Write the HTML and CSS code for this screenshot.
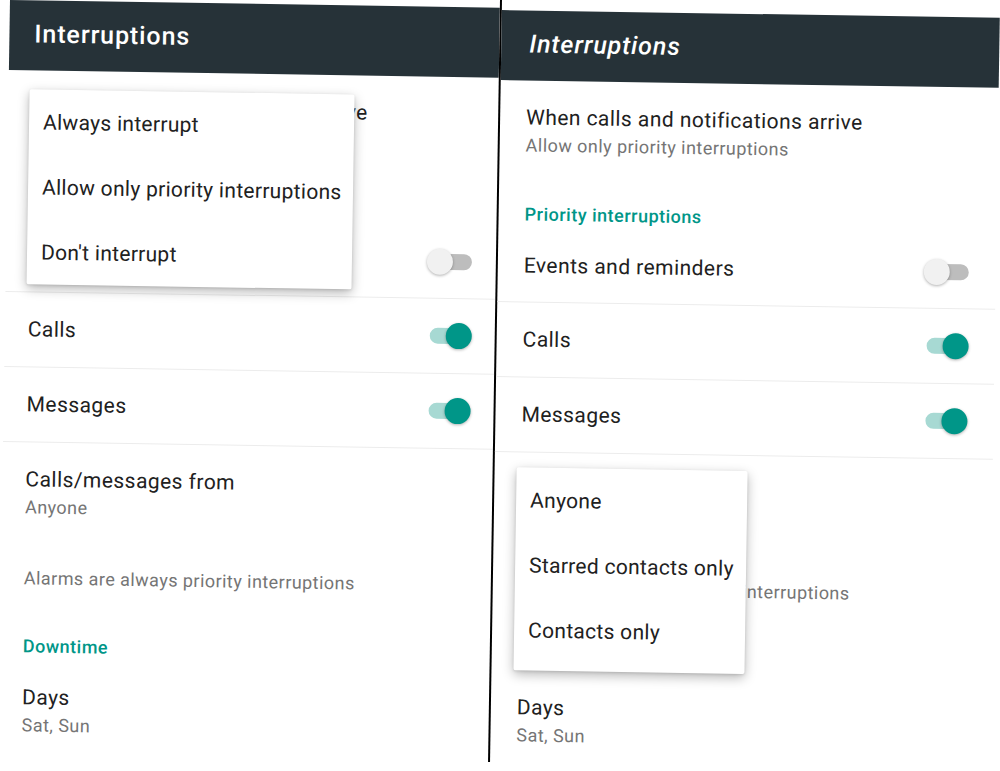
FILE: index.html
```html
<!DOCTYPE html>
<html lang="en">
<head>
<meta charset="utf-8">
<title>Interruptions</title>
<link rel="stylesheet" href="styles.css">
</head>
<body>
<div class="screen">
  <section class="panel panel-left">
    <header class="appbar"><h1 class="appbar-title">Interruptions</h1></header>
    <div class="list">
      <div class="pref pref-first">
        <div class="pref-title">When calls and notifications arrive</div>
        <div class="pref-summary">Allow only priority interruptions</div>
      </div>
      <div class="category category-priority">Priority interruptions</div>
      <div class="switch-row row-events"><span class="pref-title">Events and reminders</span><span class="switch"></span></div>
      <div class="switch-row"><span class="pref-title">Calls</span><span class="switch on"></span></div>
      <div class="switch-row"><span class="pref-title">Messages</span><span class="switch on"></span></div>
      <div class="pref pref-from">
        <div class="pref-title">Calls/messages from</div>
        <div class="pref-summary">Anyone</div>
      </div>
      <div class="note">Alarms are always priority interruptions</div>
      <div class="category category-downtime">Downtime</div>
      <div class="pref pref-days">
        <div class="pref-title">Days</div>
        <div class="pref-summary">Sat, Sun</div>
      </div>
    </div>
    <div class="menu menu-mode">
      <div class="menu-item">Always interrupt</div>
      <div class="menu-item">Allow only priority interruptions</div>
      <div class="menu-item">Don't interrupt</div>
    </div>
  </section>
  <section class="panel panel-right">
    <header class="appbar"><h1 class="appbar-title slanted">Interruptions</h1></header>
    <div class="list">
      <div class="pref pref-first">
        <div class="pref-title">When calls and notifications arrive</div>
        <div class="pref-summary">Allow only priority interruptions</div>
      </div>
      <div class="category category-priority">Priority interruptions</div>
      <div class="switch-row row-events"><span class="pref-title">Events and reminders</span><span class="switch"></span></div>
      <div class="switch-row"><span class="pref-title">Calls</span><span class="switch on"></span></div>
      <div class="switch-row"><span class="pref-title">Messages</span><span class="switch on"></span></div>
      <div class="pref pref-from">
        <div class="pref-title">Calls/messages from</div>
        <div class="pref-summary">Anyone</div>
      </div>
      <div class="note">Alarms are always priority interruptions</div>
      <div class="category category-downtime">Downtime</div>
      <div class="pref pref-days">
        <div class="pref-title">Days</div>
        <div class="pref-summary">Sat, Sun</div>
      </div>
    </div>
    <div class="menu menu-from">
      <div class="menu-item">Anyone</div>
      <div class="menu-item">Starred contacts only</div>
      <div class="menu-item">Contacts only</div>
    </div>
  </section>
</div>
</body>
</html>
```

FILE: styles.css
```css
* { box-sizing: border-box; }

html, body {
  margin: 0;
  padding: 0;
  background: #ffffff;
}

body {
  width: 1000px;
  height: 771px;
  overflow: hidden;
  font-family: Roboto, "Noto Sans", "Liberation Sans", sans-serif;
  color: #212121;
}

.screen {
  display: grid;
  grid-template-columns: 490px 500px;
  padding-left: 10px;
  height: 771px;
}

.panel {
  position: relative;
  height: 762px;
  background: #ffffff;
  transform: rotate(0.9deg);
  transform-origin: 0 0;
}

.panel-left {
  --pad: 23px;
}

.panel-right {
  --pad: 26px;
  padding-top: 10px;
  border-left: 2px solid #000000;
}

.appbar {
  height: 70px;
  background: #263238;
  display: flex;
  align-items: center;
  padding-left: calc(var(--pad) + 2px);
}

.appbar-title {
  margin: 0;
  font-size: 25px;
  font-weight: 500;
  color: #ffffff;
  letter-spacing: 0.9px;
  line-height: 30px;
  margin-top: -2px;
}

.slanted {
  font-style: italic;
}

.list {
  display: flex;
  flex-direction: column;
}

.pref {
  padding: 0 var(--pad);
}

.pref-title {
  font-size: 21px;
  line-height: 24px;
  letter-spacing: 0.45px;
  color: #212121;
  white-space: nowrap;
}

.pref-summary {
  font-size: 18px;
  line-height: 22px;
  letter-spacing: 0.45px;
  margin-top: 5px;
  color: #757575;
}

.pref-first {
  padding-top: 25px;
  padding-bottom: 22px;
}

.category {
  padding: 0 var(--pad);
  font-size: 18px;
  line-height: 22px;
  letter-spacing: 0.5px;
  font-weight: 500;
  color: #009688;
}

.category-priority {
  padding-top: 25px;
  padding-bottom: 4px;
}

.switch-row {
  height: 75px;
  padding: 0 var(--pad);
  display: flex;
  align-items: center;
  justify-content: space-between;
  border-bottom: 1px solid #ececec;
}

.row-events {
  height: 73px;
}

.switch {
  position: relative;
  width: 46px;
  height: 26px;
  flex: none;
}

.switch::before {
  content: "";
  position: absolute;
  left: 4px;
  right: 1px;
  top: 5px;
  height: 16px;
  border-radius: 8px;
  background: #bdbdbd;
}

.switch::after {
  content: "";
  position: absolute;
  left: 0;
  top: 0;
  width: 26px;
  height: 26px;
  border-radius: 50%;
  background: #f1f1f1;
  box-shadow: 0 1px 3px rgba(0, 0, 0, 0.3);
}

.switch.on::before {
  background: #a7d9d3;
}

.switch.on::after {
  left: auto;
  right: 0;
  background: #009688;
}

.pref-from {
  padding-top: 25px;
}

.note {
  padding: 49px var(--pad) 0;
  font-size: 18px;
  line-height: 22px;
  letter-spacing: 0.45px;
  color: #757575;
  white-space: nowrap;
}

.category-downtime {
  padding-top: 46px;
}

.pref-days {
  padding-top: 28px;
}

.menu {
  position: absolute;
  background: #ffffff;
  box-shadow: 0 4px 12px rgba(0, 0, 0, 0.28), 0 1px 3px rgba(0, 0, 0, 0.12);
  border-radius: 2px;
  display: flex;
  flex-direction: column;
}

.menu-item {
  height: 65px;
  display: flex;
  align-items: center;
  padding: 0 14px;
  font-size: 21px;
  letter-spacing: 0.3px;
  color: #212121;
  white-space: nowrap;
}

.menu-mode {
  left: 21px;
  top: 89px;
  width: 325px;
}

.menu-from {
  left: 22px;
  top: 467px;
  width: 231px;
  padding-bottom: 8px;
}
```
